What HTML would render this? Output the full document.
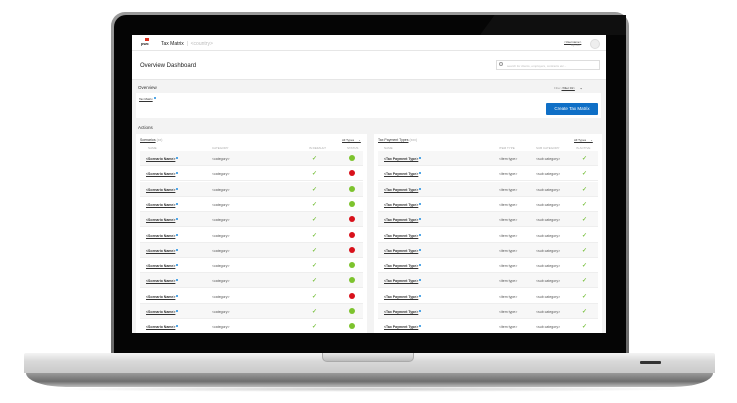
<!DOCTYPE html>
<html><head><style>
*{margin:0;padding:0;box-sizing:border-box}
body{width:737px;height:403px;background:#fff;position:relative;overflow:hidden;font-family:"Liberation Sans",sans-serif}
.abs{position:absolute}
.lid{left:111px;top:12px;width:518px;height:343px;border-radius:14px 14px 0 0;background:linear-gradient(#9a9a9a,#6a6a6a);}
.bezel{left:114px;top:15px;width:512px;height:340px;border-radius:12px 12px 0 0;background:#050505}
.screen{left:132px;top:35px;width:474px;height:298px;background:#f3f3f3;overflow:hidden;font-size:4px;color:#444}
.base{left:24px;top:353px;width:691px;height:20px;background:linear-gradient(#f4f4f4,#d9d9d9 40%,#c9c9c9);border-radius:2px 2px 0 0}
.base2{left:26px;top:373px;width:687px;height:14px;background:linear-gradient(#9a9a9a,#6e6e6e 60%,#bdbdbd);border-radius:0 0 40px 40px/0 0 14px 14px}
.shadow{left:40px;top:386px;width:657px;height:6px;background:radial-gradient(ellipse at center,rgba(0,0,0,.2),rgba(0,0,0,0) 70%)}
.notch{left:322px;top:353px;width:92px;height:9px;background:linear-gradient(#e8e8e8,#bcbcbc);border-radius:0 0 5px 5px;border:1px solid #aaa;border-top:none}
.slot{left:640px;top:361px;width:21px;height:3px;background:#333;border-radius:1px}
.card{background:#fff;position:absolute}
.row{position:absolute;left:4px;right:4px;height:15px;border-bottom:1px solid #eee;font-size:3.5px;color:#555}
.row:nth-child(odd){background:#f7f7f7}
.nm{position:absolute;left:6px;top:6px;text-decoration:underline;font-weight:bold;color:#333}
.dot{display:inline-block;width:2px;height:2px;border-radius:50%;background:#1a8be0;vertical-align:top;margin-left:1px}
.ck{position:absolute;top:4px;color:#7cc243;font-size:6px;font-weight:bold}
.st{position:absolute;top:4px;width:6px;height:6px;border-radius:50%}
.g{background:#7dc32e}.r{background:#d8111b}
.hd{position:absolute;top:12px;font-size:3px;color:#aaa}
</style></head><body>
<div class="abs lid"></div>
<div class="abs bezel"></div>
<div class="abs" style="left:480px;top:15px;width:146px;height:20px;background:#0f0f0f;clip-path:polygon(10% 0,100% 0,100% 100%,0 100%)"></div>
<div class="abs screen">
 <div class="abs" style="left:0;top:0;width:474px;height:16px;background:#fff;border-bottom:1px solid #e6e6e6"></div>
 <div class="abs" style="left:9px;top:6px;font-size:4px;font-weight:bold;color:#222">pwc</div>
 <div class="abs" style="left:13px;top:3px;width:4px;height:3px;background:#e0301e"></div>
 <div class="abs" style="left:29px;top:6px;font-size:5px;color:#222">Tax Matrix &nbsp;<span style="color:#bbb">| &nbsp;&lt;country&gt;</span></div>
 <div class="abs" style="left:432px;top:5px;font-size:3px;color:#333;text-decoration:underline">&lt;Username&gt;</div>
 <div class="abs" style="left:439px;top:9px;font-size:2.5px;color:#aaa">sign out</div>
 <div class="abs" style="left:458px;top:4px;width:10px;height:10px;border-radius:50%;background:#eee;border:1px solid #ddd"></div>
 <div class="abs" style="left:0;top:16px;width:474px;height:29px;background:#fff;border-bottom:1px solid #e6e6e6"></div>
 <div class="abs" style="left:8px;top:28px;font-size:6px;color:#222">Overview Dashboard</div>
 <div class="abs" style="left:364px;top:25px;width:104px;height:10px;border:1px solid #ddd;background:#fff;font-size:3px;color:#bbb;padding:3px 0 0 10px">search for clients, employers, contracts etc...</div>
 <div class="abs" style="left:367px;top:27px;width:4px;height:4px;border:1px solid #999;border-radius:50%"></div>
 <div class="abs" style="left:6px;top:50px;font-size:4.5px;color:#333">Overview</div>
 <div class="abs" style="left:422px;top:51px;font-size:3px;color:#999">Filter <span style="color:#333;text-decoration:underline">&lt;filter 01&gt;</span> &nbsp; &nbsp; &nbsp;<b style="color:#222">⌄</b></div>
 <div class="card" style="left:4px;top:58px;width:465px;height:25px"></div>
 <div class="abs" style="left:7px;top:62px;font-size:3px;color:#333;text-decoration:underline">Tax Matrix<span class="dot"></span></div>
 <div class="abs" style="left:414px;top:68px;width:52px;height:12px;background:#0f6fc6;color:#fff;font-size:4.5px;text-align:center;line-height:12px;border-radius:1px">Create Tax Matrix</div>
 <div class="abs" style="left:6px;top:90px;font-size:4.5px;color:#333">Actions</div>
 <div class="card" style="left:4px;top:99px;width:231px;height:210px">
  <div class="abs" style="left:4px;top:4px;font-size:3.5px;color:#333"><u>Scenarios</u> <span style="color:#aaa">(xx)</span></div>
  <div class="abs" style="left:206px;top:4px;font-size:3px;color:#333;text-decoration:underline">All Types &nbsp; &nbsp; ⌄</div>
  <span class="hd" style="left:12px">NAME</span><span class="hd" style="left:76px">CATEGORY</span><span class="hd" style="left:173px">IS DEFAULT</span><span class="hd" style="left:211px">STATUS</span>
 </div>
 <div class="card" style="left:242px;top:99px;width:228px;height:210px">
  <div class="abs" style="left:4px;top:4px;font-size:3.5px;color:#333"><u>Tax Payment Types</u> <span style="color:#aaa">(xxx)</span></div>
  <div class="abs" style="left:200px;top:4px;font-size:3px;color:#333;text-decoration:underline">All Types &nbsp; &nbsp; ⌄</div>
  <span class="hd" style="left:10px">NAME</span><span class="hd" style="left:125px">ITEM TYPE</span><span class="hd" style="left:162px">SUB CATEGORY</span><span class="hd" style="left:202px">IS ACTIVE</span>
 </div>
 <div id="L" class="abs" style="left:4px;top:116px;width:231px;height:200px"></div>
 <div id="R" class="abs" style="left:242px;top:116px;width:228px;height:200px"></div>
</div>
<div class="abs base"></div>
<div class="abs base2"></div>
<div class="abs shadow"></div>
<div class="abs notch"></div>
<div class="abs slot"></div>
<script>
var st="grggrrrggrgg";
var L="",R="";
for(var i=0;i<12;i++){
 var t=i*15.3;
 L+='<div class="row" style="top:'+t+'px"><span class="nm">&lt;Scenario Name&gt;<span class="dot"></span></span><span style="position:absolute;left:72px;top:6px">&lt;category&gt;</span><span class="ck" style="left:172px">✓</span><span class="st '+st[i]+'" style="left:209px"></span></div>';
 R+='<div class="row" style="top:'+t+'px"><span class="nm">&lt;Tax Payment Type&gt;<span class="dot"></span></span><span style="position:absolute;left:121px;top:6px">&lt;item type&gt;</span><span style="position:absolute;left:158px;top:6px">&lt;sub category&gt;</span><span class="ck" style="left:204px">✓</span></div>';
}
document.getElementById("L").innerHTML=L;document.getElementById("R").innerHTML=R;
</script>
</body></html>
